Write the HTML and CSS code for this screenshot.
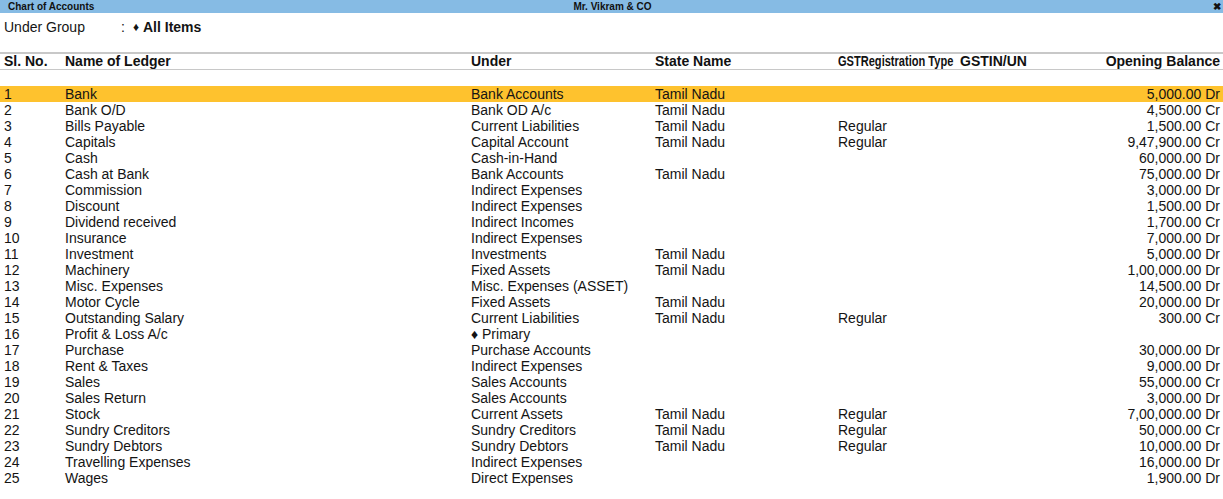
FILE: index.html
```html
<!DOCTYPE html>
<html>
<head>
<meta charset="utf-8">
<link rel="stylesheet" href="styles.css">
</head>
<body>
<div class="titlebar">
  <span class="t-left">Chart of Accounts</span>
  <span class="t-center">Mr. Vikram &amp; CO</span>
  <span class="t-close">&#x2716;</span>
</div>
<div class="filter">
  <span class="f-label">Under Group</span>
  <span class="f-colon">:</span>
  <span class="f-diamond">&#x2666;</span>
  <span class="f-value">All Items</span>
</div>
<div class="grid head">
  <div>Sl. No.</div>
  <div>Name of Ledger</div>
  <div>Under</div>
  <div>State Name</div>
  <div class="narrow"><span>GSTRegistration Type</span></div>
  <div>GSTIN/UN</div>
  <div class="amt">Opening Balance</div>
</div>
<div class="rows">
  <div class="grid row sel"><div>1</div><div>Bank</div><div>Bank Accounts</div><div>Tamil Nadu</div><div></div><div></div><div class="amt">5,000.00 Dr</div></div>
  <div class="grid row"><div>2</div><div>Bank O/D</div><div>Bank OD A/c</div><div>Tamil Nadu</div><div></div><div></div><div class="amt">4,500.00 Cr</div></div>
  <div class="grid row"><div>3</div><div>Bills Payable</div><div>Current Liabilities</div><div>Tamil Nadu</div><div>Regular</div><div></div><div class="amt">1,500.00 Cr</div></div>
  <div class="grid row"><div>4</div><div>Capitals</div><div>Capital Account</div><div>Tamil Nadu</div><div>Regular</div><div></div><div class="amt">9,47,900.00 Cr</div></div>
  <div class="grid row"><div>5</div><div>Cash</div><div>Cash-in-Hand</div><div></div><div></div><div></div><div class="amt">60,000.00 Dr</div></div>
  <div class="grid row"><div>6</div><div>Cash at Bank</div><div>Bank Accounts</div><div>Tamil Nadu</div><div></div><div></div><div class="amt">75,000.00 Dr</div></div>
  <div class="grid row"><div>7</div><div>Commission</div><div>Indirect Expenses</div><div></div><div></div><div></div><div class="amt">3,000.00 Dr</div></div>
  <div class="grid row"><div>8</div><div>Discount</div><div>Indirect Expenses</div><div></div><div></div><div></div><div class="amt">1,500.00 Dr</div></div>
  <div class="grid row"><div>9</div><div>Dividend received</div><div>Indirect Incomes</div><div></div><div></div><div></div><div class="amt">1,700.00 Cr</div></div>
  <div class="grid row"><div>10</div><div>Insurance</div><div>Indirect Expenses</div><div></div><div></div><div></div><div class="amt">7,000.00 Dr</div></div>
  <div class="grid row"><div>11</div><div>Investment</div><div>Investments</div><div>Tamil Nadu</div><div></div><div></div><div class="amt">5,000.00 Dr</div></div>
  <div class="grid row"><div>12</div><div>Machinery</div><div>Fixed Assets</div><div>Tamil Nadu</div><div></div><div></div><div class="amt">1,00,000.00 Dr</div></div>
  <div class="grid row"><div>13</div><div>Misc. Expenses</div><div>Misc. Expenses (ASSET)</div><div></div><div></div><div></div><div class="amt">14,500.00 Dr</div></div>
  <div class="grid row"><div>14</div><div>Motor Cycle</div><div>Fixed Assets</div><div>Tamil Nadu</div><div></div><div></div><div class="amt">20,000.00 Dr</div></div>
  <div class="grid row"><div>15</div><div>Outstanding Salary</div><div>Current Liabilities</div><div>Tamil Nadu</div><div>Regular</div><div></div><div class="amt">300.00 Cr</div></div>
  <div class="grid row"><div>16</div><div>Profit &amp; Loss A/c</div><div>&#x2666; Primary</div><div></div><div></div><div></div><div class="amt"></div></div>
  <div class="grid row"><div>17</div><div>Purchase</div><div>Purchase Accounts</div><div></div><div></div><div></div><div class="amt">30,000.00 Dr</div></div>
  <div class="grid row"><div>18</div><div>Rent &amp; Taxes</div><div>Indirect Expenses</div><div></div><div></div><div></div><div class="amt">9,000.00 Dr</div></div>
  <div class="grid row"><div>19</div><div>Sales</div><div>Sales Accounts</div><div></div><div></div><div></div><div class="amt">55,000.00 Cr</div></div>
  <div class="grid row"><div>20</div><div>Sales Return</div><div>Sales Accounts</div><div></div><div></div><div></div><div class="amt">3,000.00 Dr</div></div>
  <div class="grid row"><div>21</div><div>Stock</div><div>Current Assets</div><div>Tamil Nadu</div><div>Regular</div><div></div><div class="amt">7,00,000.00 Dr</div></div>
  <div class="grid row"><div>22</div><div>Sundry Creditors</div><div>Sundry Creditors</div><div>Tamil Nadu</div><div>Regular</div><div></div><div class="amt">50,000.00 Cr</div></div>
  <div class="grid row"><div>23</div><div>Sundry Debtors</div><div>Sundry Debtors</div><div>Tamil Nadu</div><div>Regular</div><div></div><div class="amt">10,000.00 Dr</div></div>
  <div class="grid row"><div>24</div><div>Travelling Expenses</div><div>Indirect Expenses</div><div></div><div></div><div></div><div class="amt">16,000.00 Dr</div></div>
  <div class="grid row"><div>25</div><div>Wages</div><div>Direct Expenses</div><div></div><div></div><div></div><div class="amt">1,900.00 Dr</div></div>
</div>
</body>
</html>
```
FILE: styles.css
```css
html, body {
  margin: 0;
  padding: 0;
  background: #ffffff;
}
body {
  font-family: "Liberation Sans", Arial, sans-serif;
  color: #141414;
  width: 1223px;
  height: 499px;
  overflow: hidden;
}
.titlebar {
  height: 13px;
  background: #86bbe4;
  display: grid;
  grid-template-columns: 1fr auto 1fr;
  align-items: center;
  font-size: 10px;
  font-weight: bold;
  line-height: 13px;
  color: #111;
}
.t-left { padding-left: 8px; }
.t-center { text-align: center; padding-left: 2px; }
.t-close { justify-self: end; padding-right: 2px; font-size: 10px; }
.filter {
  height: 33px;
  padding: 6px 0 0 4px;
  font-size: 14px;
  line-height: 16px;
  display: flex;
  align-items: flex-start;
}
.f-label { width: 117px; }
.f-colon { width: 12px; }
.f-diamond { font-size: 12px; width: 10px; }
.f-value { font-weight: bold; }
.grid {
  display: grid;
  grid-template-columns: 61px 406px 184px 183px 122px 1fr auto;
  padding: 0 3px 0 4px;
  font-size: 14px;
  white-space: nowrap;
}
.head {
  border-top: 2px solid #c8c8c8;
  border-bottom: 1px solid #c8c8c8;
  font-weight: bold;
  line-height: 15px;
  margin-bottom: 16px;
  color: #111;
}
.narrow span {
  display: inline-block;
  transform: scaleX(0.79);
  transform-origin: left center;
}
.row {
  line-height: 16px;
  height: 16px;
}
.row.sel {
  background: #fec22e;
}
.amt {
  text-align: right;
}
```
